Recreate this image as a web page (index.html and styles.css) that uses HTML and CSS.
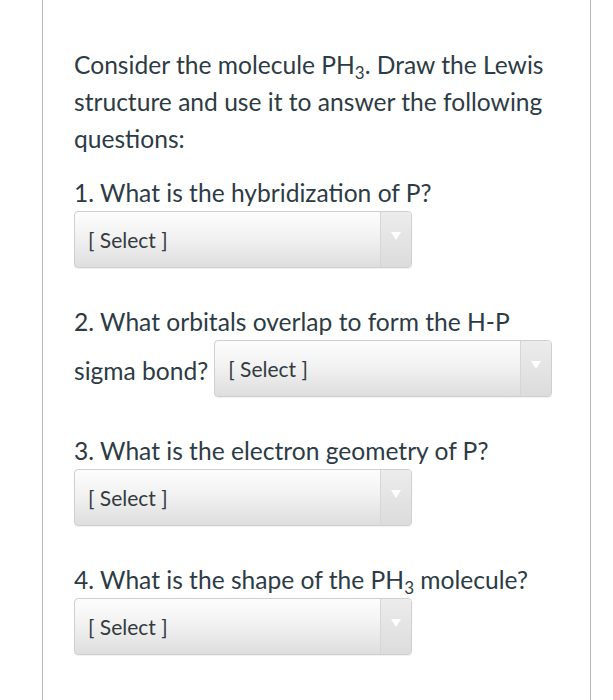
FILE: index.html
```html
<!DOCTYPE html>
<html>
<head>
<meta charset="utf-8">
<link rel="stylesheet" href="styles.css">
</head>
<body>
<div class="card">
  <p class="intro">Consider the molecule PH<sub>3</sub>. Draw the Lewis structure and use it to answer the following questions:</p>

  <div class="q q1">
    <div class="line">1. What is the hybridization of P?</div>
    <div class="sel"><span class="sel-text">[ Select ]</span><span class="sel-arrow"><span class="tri"></span></span></div>
  </div>

  <div class="q q2">
    <div class="line">2. What orbitals overlap to form the H-P</div>
    <div class="inline-row"><span class="label">sigma bond?</span><div class="sel"><span class="sel-text">[ Select ]</span><span class="sel-arrow"><span class="tri"></span></span></div></div>
  </div>

  <div class="q q3">
    <div class="line">3. What is the electron geometry of P?</div>
    <div class="sel"><span class="sel-text">[ Select ]</span><span class="sel-arrow"><span class="tri"></span></span></div>
  </div>

  <div class="q q4">
    <div class="line">4. What is the shape of the PH<sub>3</sub> molecule?</div>
    <div class="sel"><span class="sel-text">[ Select ]</span><span class="sel-arrow"><span class="tri"></span></span></div>
  </div>
</div>
</body>
</html>
```

FILE: styles.css
```css
html, body {
  margin: 0;
  padding: 0;
  background: #ffffff;
}
body {
  font-family: Lato, "Liberation Sans", sans-serif;
  color: #2d3b45;
}
.card {
  box-sizing: border-box;
  margin-left: 42px;
  width: 549px;
  height: 700px;
  border-left: 1px solid #b4b4b4;
  border-right: 1px solid #b4b4b4;
  padding: 46px 10px 0 31px;
  font-size: 24.6px;
  line-height: 37px;
}
.intro {
  margin: 0;
  width: 490px;
}
sub {
  font-size: 17px;
  line-height: 0;
  vertical-align: -5px;
}
.q {
  margin-top: 35px;
}
.q1 {
  margin-top: 17px;
}
.line {
  height: 37px;
  white-space: nowrap;
}
.sel {
  box-sizing: border-box;
  width: 338px;
  height: 57px;
  border: 1px solid #cfcfcf;
  border-radius: 4px;
  background: linear-gradient(to bottom, #fdfdfd 0%, #f2f2f2 45%, #dedede 100%);
  display: flex;
  align-items: center;
  box-shadow: 0 1px 1px rgba(0,0,0,0.06);
}
.sel-text {
  flex: 1;
  padding-left: 13px;
  font-size: 21px;
  color: #333b40;
  line-height: 1;
}
.sel-arrow {
  align-self: stretch;
  width: 31px;
  border-left: 1px solid #d6d6d6;
  background: linear-gradient(to bottom, #ececec, #dcdcdc);
  border-radius: 0 3px 3px 0;
  display: flex;
  justify-content: center;
  padding-top: 20px;
  box-sizing: border-box;
}
.tri {
  width: 0;
  height: 0;
  border-left: 5px solid transparent;
  border-right: 5px solid transparent;
  border-top: 8px solid #ffffff;
}
.inline-row {
  display: flex;
  align-items: center;
}
.label {
  margin-right: 6px;
  margin-top: 3px;
  white-space: nowrap;
}
```
